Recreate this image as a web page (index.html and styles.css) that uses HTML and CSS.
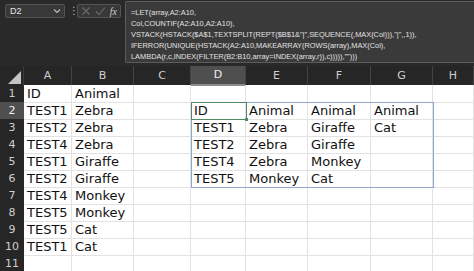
FILE: index.html
```html
<!DOCTYPE html>
<html lang="en">
<head>
    <meta charset="UTF-8">
    <meta name="viewport" content="width=device-width, initial-scale=1.0">
    <title>Spill range</title>
    <link rel="stylesheet" href="styles.css">
</head>
<body>

    <div class="topbar">
        <div class="namebox">
            <span>D2</span>
            <svg width="8" height="6" viewBox="0 0 8 6"><path d="M1 1.5 L4 4.5 L7 1.5" fill="none" stroke="#bbb" stroke-width="1.2"/></svg>
        </div>
        <div class="dots">⋮</div>
        <div class="fxbox">
            <svg width="10" height="10" viewBox="0 0 10 10"><path d="M1.5 1.5 L8.5 8.5 M8.5 1.5 L1.5 8.5" stroke="#6c6c6c" stroke-width="1.1"/></svg>
            <svg width="11" height="10" viewBox="0 0 11 10"><path d="M1 5.5 L4 8.5 L10 1.5" fill="none" stroke="#6c6c6c" stroke-width="1.1"/></svg>
            <span class="fx">fx</span>
        </div>
        <div class="formula">
            <div>=LET(array,A2:A10,</div>
            <div>Col,COUNTIF(A2:A10,A2:A10),</div>
            <div>VSTACK(HSTACK($A$1,TEXTSPLIT(REPT($B$1&amp;"|",SEQUENCE(,MAX(Col))),"|",,1)),</div>
            <div>IFERROR(UNIQUE(HSTACK(A2:A10,MAKEARRAY(ROWS(array),MAX(Col),</div>
            <div>LAMBDA(r,c,INDEX(FILTER(B2:B10,array=INDEX(array,r)),c))))),"")))</div>
        </div>
    </div>

    <div class="sheet">
        <div class="row head">
            <div class="corner"><span class="tri"></span></div>
            <div class="col">A</div><div class="col">B</div><div class="col">C</div><div class="col sel">D</div>
            <div class="col">E</div><div class="col">F</div><div class="col">G</div><div class="col">H</div>
        </div>
        <div class="row">
            <div class="num">1</div>
            <div class="cell">ID</div><div class="cell">Animal</div><div class="cell"></div><div class="cell"></div>
            <div class="cell"></div><div class="cell"></div><div class="cell"></div><div class="cell"></div>
        </div>
        <div class="row">
            <div class="num sel">2</div>
            <div class="cell">TEST1</div><div class="cell">Zebra</div><div class="cell"></div><div class="cell">ID</div>
            <div class="cell">Animal</div><div class="cell">Animal</div><div class="cell">Animal</div><div class="cell"></div>
        </div>
        <div class="row">
            <div class="num">3</div>
            <div class="cell">TEST2</div><div class="cell">Zebra</div><div class="cell"></div><div class="cell">TEST1</div>
            <div class="cell">Zebra</div><div class="cell">Giraffe</div><div class="cell">Cat</div><div class="cell"></div>
        </div>
        <div class="row">
            <div class="num">4</div>
            <div class="cell">TEST4</div><div class="cell">Zebra</div><div class="cell"></div><div class="cell">TEST2</div>
            <div class="cell">Zebra</div><div class="cell">Giraffe</div><div class="cell"></div><div class="cell"></div>
        </div>
        <div class="row">
            <div class="num">5</div>
            <div class="cell">TEST1</div><div class="cell">Giraffe</div><div class="cell"></div><div class="cell">TEST4</div>
            <div class="cell">Zebra</div><div class="cell">Monkey</div><div class="cell"></div><div class="cell"></div>
        </div>
        <div class="row">
            <div class="num">6</div>
            <div class="cell">TEST2</div><div class="cell">Giraffe</div><div class="cell"></div><div class="cell">TEST5</div>
            <div class="cell">Monkey</div><div class="cell">Cat</div><div class="cell"></div><div class="cell"></div>
        </div>
        <div class="row">
            <div class="num">7</div>
            <div class="cell">TEST4</div><div class="cell">Monkey</div><div class="cell"></div><div class="cell"></div>
            <div class="cell"></div><div class="cell"></div><div class="cell"></div><div class="cell"></div>
        </div>
        <div class="row">
            <div class="num">8</div>
            <div class="cell">TEST5</div><div class="cell">Monkey</div><div class="cell"></div><div class="cell"></div>
            <div class="cell"></div><div class="cell"></div><div class="cell"></div><div class="cell"></div>
        </div>
        <div class="row">
            <div class="num">9</div>
            <div class="cell">TEST5</div><div class="cell">Cat</div><div class="cell"></div><div class="cell"></div>
            <div class="cell"></div><div class="cell"></div><div class="cell"></div><div class="cell"></div>
        </div>
        <div class="row">
            <div class="num">10</div>
            <div class="cell">TEST1</div><div class="cell">Cat</div><div class="cell"></div><div class="cell"></div>
            <div class="cell"></div><div class="cell"></div><div class="cell"></div><div class="cell"></div>
        </div>
        <div class="row">
            <div class="num">11</div>
            <div class="cell"></div><div class="cell"></div><div class="cell"></div><div class="cell"></div>
            <div class="cell"></div><div class="cell"></div><div class="cell"></div><div class="cell"></div>
        </div>

        <!-- spill range and active cell -->
        <div class="spill"></div>
        <div class="active"><span class="handle"></span></div>
    </div>

</body>
</html>
```

FILE: styles.css
```css
body {
    margin: 0;
    background-color: #292929;
    font-family: "DejaVu Sans", sans-serif;
    overflow: hidden;
}
.topbar {
    height: 66px;
    display: flex;
    align-items: flex-start;
    gap: 4px;
    padding-left: 5px;
    background-color: #292929;
}
.namebox {
    margin-top: 4px;
    width: 60px;
    height: 14px;
    box-sizing: border-box;
    display: flex;
    align-items: center;
    justify-content: space-between;
    padding: 0 3px 0 4px;
    background-color: #383838;
    border: 1px solid #545454;
    border-radius: 2px;
    color: #e6e6e6;
    font-family: "Liberation Sans", sans-serif;
    font-size: 9px;
}
.dots {
    margin-top: 4px;
    color: #bdbdbd;
    font-size: 10px;
    line-height: 14px;
    width: 4px;
}
.fxbox {
    margin-top: 4px;
    width: 44px;
    height: 14px;
    box-sizing: border-box;
    display: flex;
    align-items: center;
    justify-content: space-between;
    padding: 0 3px;
    background-color: #383838;
    border: 1px solid #545454;
    border-radius: 2px;
}
.fx {
    color: #cfcfcf;
    font-family: "Liberation Serif", serif;
    font-style: italic;
    font-size: 10px;
}
.formula {
    margin-top: 1px;
    flex: 1;
    height: 62px;
    box-sizing: border-box;
    padding: 5px 0 0 5px;
    background-color: #3a3a3a;
    border: 1px solid #5c5c5c;
    border-right: none;
    border-radius: 2px 0 0 2px;
    color: #e2e2e2;
    font-family: "Liberation Sans", sans-serif;
    font-size: 7.4px;
    line-height: 11px;
    white-space: nowrap;
}
.sheet {
    position: relative;
    background-color: #ffffff;
}
.row {
    display: grid;
    grid-template-columns: 24px 48px 62px 57px 55px 62px 63px 62px 1fr;
    height: 17px;
}
.row.head {
    height: 19px;
    background-color: #262626;
}
.corner {
    position: relative;
    background-color: #262626;
    border-right: 1px solid #3a3a3a;
}
.tri {
    position: absolute;
    right: 2px;
    bottom: 2px;
    width: 0;
    height: 0;
    border-left: 13px solid transparent;
    border-bottom: 13px solid #c4c4c4;
}
.col {
    box-sizing: border-box;
    border-right: 1px solid #444;
    color: #cfcfcf;
    font-size: 11px;
    line-height: 19px;
    text-align: center;
}
.col.sel {
    background-color: #4f4f4f;
    border-bottom: 2px solid #8c8c8c;
    color: #f0f0f0;
    line-height: 18px;
}
.num {
    box-sizing: border-box;
    background-color: #262626;
    border-bottom: 1px solid #3a3a3a;
    color: #cfcfcf;
    font-size: 11px;
    line-height: 17px;
    text-align: center;
}
.num.sel {
    background-color: #4f4f4f;
    color: #f0f0f0;
}
.cell {
    box-sizing: border-box;
    border-right: 1px solid #e2e2e2;
    border-bottom: 1px solid #e2e2e2;
    padding-left: 3px;
    color: #111;
    font-size: 13px;
    line-height: 17px;
    white-space: nowrap;
}
.spill {
    position: absolute;
    left: 191px;
    top: 36px;
    width: 243px;
    height: 86px;
    box-sizing: border-box;
    border: 1px solid #8fa6d0;
}
.active {
    position: absolute;
    left: 191px;
    top: 36px;
    width: 56px;
    height: 18px;
    box-sizing: border-box;
    border: 1px solid #4f8c66;
}
.handle {
    position: absolute;
    right: -2px;
    bottom: -2px;
    width: 3px;
    height: 3px;
    background-color: #4f8c66;
}
```
